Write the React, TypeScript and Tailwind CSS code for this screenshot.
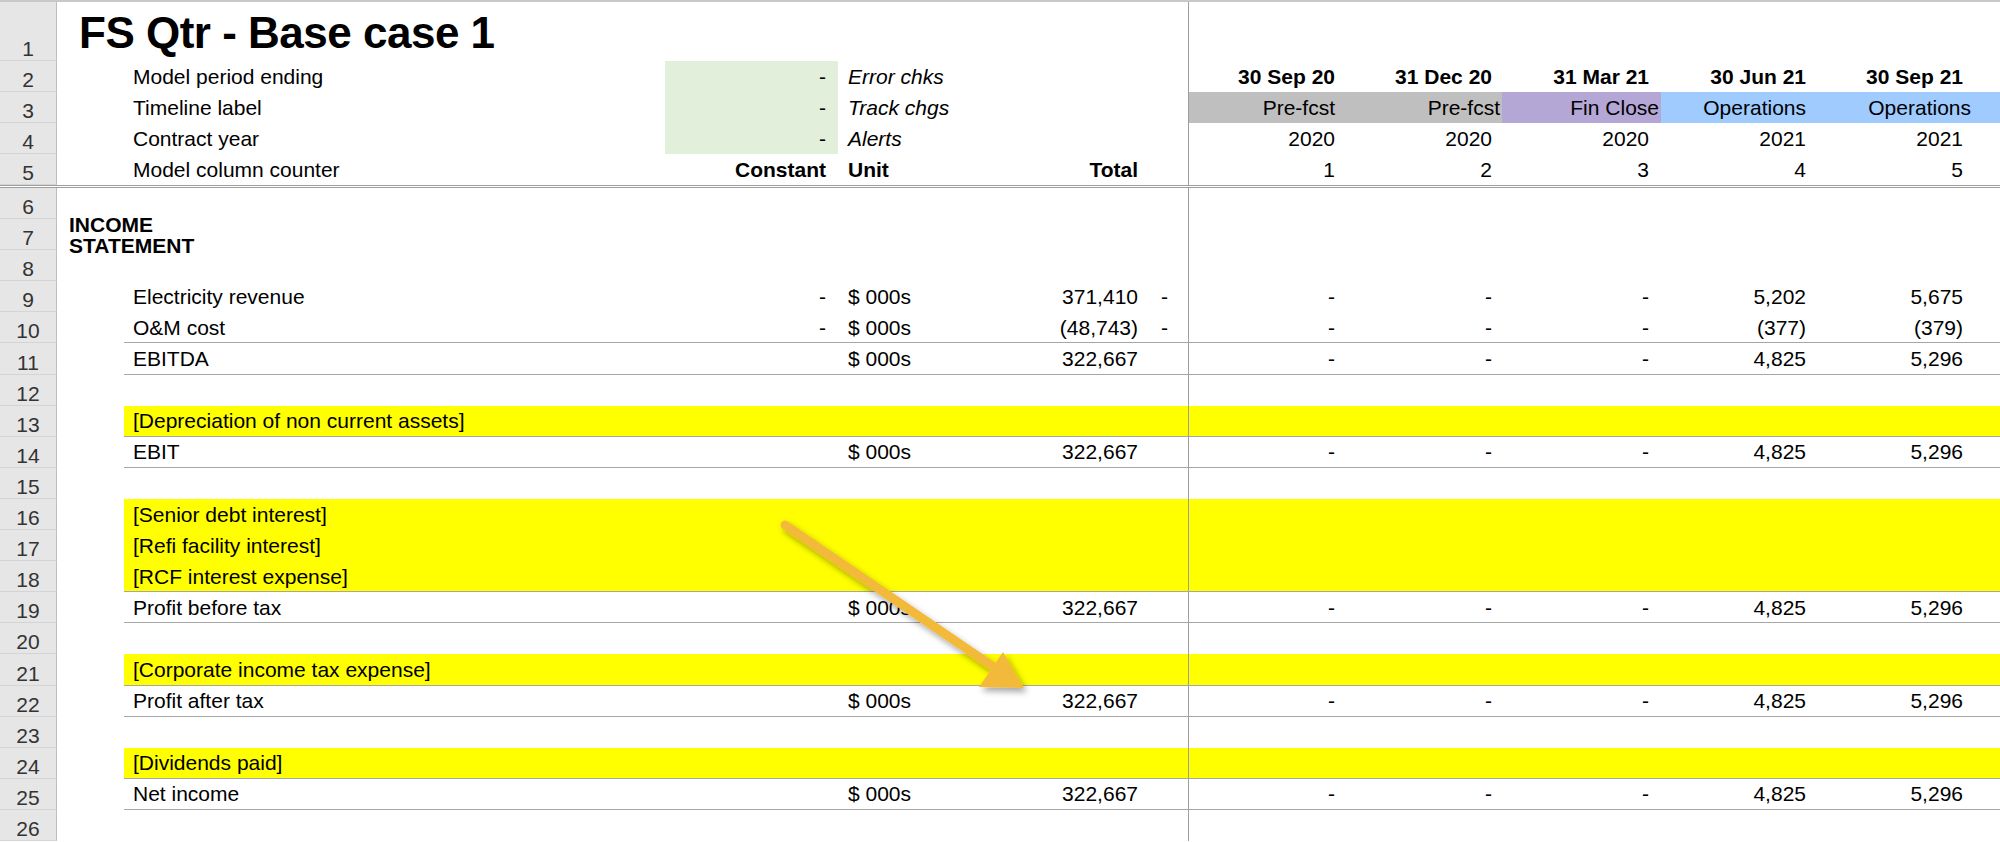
import React from "react";

type Cell = string | undefined;
interface Row {
  n: number;
  label?: string;
  bold?: boolean;
  yellow?: boolean;
  lineBelow?: boolean;
  constant?: string;
  unit?: string;
  total?: string;
  flag?: string;
  vals?: Cell[];
}

const dash = ["-", "-", "-"];

const rows: Row[] = [
  { n: 6 },
  { n: 7, label: "INCOME STATEMENT", bold: true },
  { n: 8 },
  { n: 9, label: "Electricity revenue", constant: "-", unit: "$ 000s", total: "371,410", flag: "-", vals: [...dash, "5,202", "5,675"] },
  { n: 10, label: "O&M cost", constant: "-", unit: "$ 000s", total: "(48,743)", flag: "-", vals: [...dash, "(377)", "(379)"], lineBelow: true },
  { n: 11, label: "EBITDA", unit: "$ 000s", total: "322,667", vals: [...dash, "4,825", "5,296"], lineBelow: true },
  { n: 12 },
  { n: 13, label: "[Depreciation of non current assets]", yellow: true, lineBelow: true },
  { n: 14, label: "EBIT", unit: "$ 000s", total: "322,667", vals: [...dash, "4,825", "5,296"], lineBelow: true },
  { n: 15 },
  { n: 16, label: "[Senior debt interest]", yellow: true },
  { n: 17, label: "[Refi facility interest]", yellow: true },
  { n: 18, label: "[RCF interest expense]", yellow: true, lineBelow: true },
  { n: 19, label: "Profit before tax", unit: "$ 000s", total: "322,667", vals: [...dash, "4,825", "5,296"], lineBelow: true },
  { n: 20 },
  { n: 21, label: "[Corporate income tax expense]", yellow: true, lineBelow: true },
  { n: 22, label: "Profit after tax", unit: "$ 000s", total: "322,667", vals: [...dash, "4,825", "5,296"], lineBelow: true },
  { n: 23 },
  { n: 24, label: "[Dividends paid]", yellow: true, lineBelow: true },
  { n: 25, label: "Net income", unit: "$ 000s", total: "322,667", vals: [...dash, "4,825", "5,296"], lineBelow: true },
  { n: 26 },
];

function Num({ n, h }: { n: number; h: string }) {
  return (
    <div className={`${h} w-[57px] shrink-0 bg-[#e6e6e6] border-r border-[#bdbdbd] border-b border-b-[#d4d4d4] flex items-end justify-center pb-[1px] text-[#333]`}>
      {n}
    </div>
  );
}

function Periods({ vals, cls = "" }: { vals?: Cell[]; cls?: string }) {
  return (
    <>
      {[0, 1, 2, 3, 4].map((i) => (
        <div key={i} className={`w-[157px] shrink-0 text-right pr-[11px] ${cls}`}>
          {vals?.[i] ?? ""}
        </div>
      ))}
      <div className="flex-1" />
    </>
  );
}

export default function App() {
  return (
    <div className="relative w-[2000px] h-[842px] overflow-hidden bg-white text-[21px] leading-none text-black" style={{ fontFamily: '"Liberation Sans", Arial, sans-serif' }}>
      <div className="h-[2px] bg-[#c8c8c8]" />
      {/* Row 1 */}
      <div className="flex h-[59px]">
        <Num n={1} h="h-[59px]" />
        <div className="w-[1131px] flex items-end pl-[22px] pb-[6px] text-[44px] font-bold tracking-[-0.5px]">FS Qtr - Base case 1</div>
        <div className="w-px bg-[#9e9e9e]" />
      </div>
      {/* Rows 2-5 */}
      {[
        { n: 2, label: "Model period ending", c: "-", u: "Error chks", uI: true, p: ["30 Sep 20", "31 Dec 20", "31 Mar 21", "30 Jun 21", "30 Sep 21"], pb: true },
        { n: 3, label: "Timeline label", c: "-", u: "Track chgs", uI: true, p: ["Pre-fcst", "Pre-fcst", "Fin Close", "Operations", "Operations"], band: true },
        { n: 4, label: "Contract year", c: "-", u: "Alerts", uI: true, p: ["2020", "2020", "2020", "2021", "2021"] },
        { n: 5, label: "Model column counter", c: "Constant", cB: true, u: "Unit", uB: true, t: "Total", p: ["1", "2", "3", "4", "5"] },
      ].map((r) => (
        <div key={r.n} className="flex h-[31px] items-stretch">
          <Num n={r.n} h="h-[31px]" />
          <div className="w-[67px]" />
          <div className="w-[541px] flex items-center pl-[9px]">{r.label}</div>
          <div className={`w-[173px] flex items-center justify-end pr-[12px] ${r.n < 5 ? "bg-[#e2efda]" : ""} ${r.cB ? "font-bold" : ""}`}>{r.c}</div>
          <div className={`w-[162px] flex items-center pl-[10px] ${r.uI ? "italic" : ""} ${r.uB ? "font-bold" : ""}`}>{r.u}</div>
          <div className="w-[148px] flex items-center justify-end pr-[10px] font-bold">{r.t ?? ""}</div>
          <div className="w-[40px]" />
          <div className="w-px bg-[#9e9e9e]" />
          {r.band ? (
            <>
              <div className="w-[313px] bg-[#bfbfbf] flex">
                <div className="w-[157px] flex items-center justify-end pr-[11px]">Pre-fcst</div>
                <div className="w-[156px] flex items-center justify-end pr-[2px]">Pre-fcst</div>
              </div>
              <div className="w-[159px] bg-[#b4a7d6] flex items-center justify-end pr-[2px]">Fin Close</div>
              <div className="flex-1 bg-[#9fcbff] flex">
                <div className="w-[157px] flex items-center justify-end pr-[12px]">Operations</div>
                <div className="w-[157px] flex items-center justify-end pr-[4px]">Operations</div>
              </div>
            </>
          ) : (
            <div className="flex-1 flex items-center">
              <Periods vals={r.p} cls={r.pb ? "font-bold" : ""} />
            </div>
          )}
        </div>
      ))}
      <div className="h-[3px] border-t border-b border-[#9e9e9e] bg-white" />
      {/* Body */}
      {rows.map((r) => (
        <div key={r.n} className="flex h-[31.1px]">
          <Num n={r.n} h="h-[31.1px]" />
          <div className="w-[67px] flex items-center pl-[12px] font-bold">{r.bold ? r.label : ""}</div>
          <div className={`flex-1 flex items-stretch ${r.yellow ? "bg-[#ffff00]" : ""} ${r.lineBelow ? "border-b border-[#a6a6a6]" : ""}`}>
            <div className="w-[541px] flex items-center pl-[9px]">{r.bold ? "" : r.label}</div>
            <div className="w-[173px] flex items-center justify-end pr-[12px]">{r.constant}</div>
            <div className="w-[162px] flex items-center pl-[10px]">{r.unit}</div>
            <div className="w-[148px] flex items-center justify-end pr-[10px]">{r.total}</div>
            <div className="w-[40px] flex items-center pl-[13px]">{r.flag}</div>
            <div className="w-px bg-[#9e9e9e]" />
            <div className="flex-1 flex items-center">
              <Periods vals={r.vals} />
            </div>
          </div>
        </div>
      ))}
      {/* Callout arrow */}
      <svg className="absolute left-0 top-0 pointer-events-none" width="2000" height="842">
        <defs>
          <filter id="sh" x="-20%" y="-20%" width="140%" height="140%">
            <feDropShadow dx="3" dy="4" stdDeviation="3" floodColor="#000" floodOpacity="0.35" />
          </filter>
        </defs>
        <g filter="url(#sh)">
          <line x1="785" y1="525" x2="995" y2="668" stroke="#f2b93b" strokeWidth="9" strokeLinecap="round" />
          <polygon points="1024,688 979,687 1003,652" fill="#f2b93b" />
        </g>
      </svg>
    </div>
  );
}
